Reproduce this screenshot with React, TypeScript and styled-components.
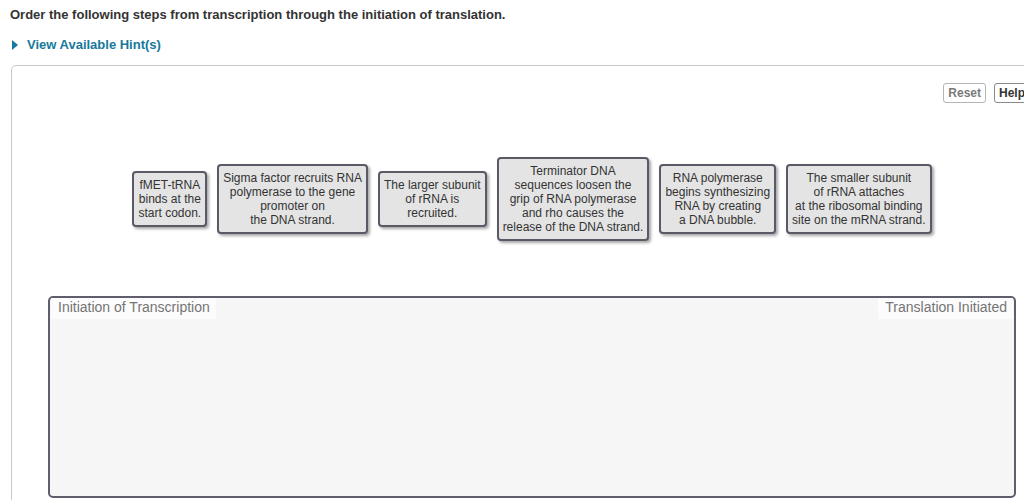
import styled, { createGlobalStyle } from 'styled-components';

const GlobalStyle = createGlobalStyle`
  html, body {
    margin: 0;
    padding: 0;
    overflow: hidden;
    background: #ffffff;
  }
  body {
    font-family: 'Liberation Sans', Arial, sans-serif;
    color: #333;
  }
`;

const Page = styled.div`
  width: 1060px;
  padding: 7px 0 0 0;
`;

const Prompt = styled.div`
  margin-left: 10px;
  font-size: 13px;
  font-weight: bold;
  line-height: 15px;
  color: #333;
`;

const HintToggle = styled.div`
  display: flex;
  align-items: center;
  gap: 9px;
  margin: 15px 0 0 12px;
  font-size: 13px;
  font-weight: bold;
  line-height: 15px;
  color: #17799b;
`;

const Triangle = styled.span`
  width: 0;
  height: 0;
  border-top: 5px solid transparent;
  border-bottom: 5px solid transparent;
  border-left: 6px solid #17799b;
`;

const Panel = styled.div`
  margin: 13px 0 0 11px;
  width: 1030px;
  height: 460px;
  border: 1px solid #c8c8c8;
  border-radius: 5px;
  padding: 17px 10px 0 0;
  box-sizing: border-box;
`;

const Toolbar = styled.div`
  display: flex;
  justify-content: flex-end;
  gap: 8px;
  height: 20px;
`;

const ToolButton = styled.button<{ $muted?: boolean }>`
  height: 20px;
  padding: 0 4px;
  border: 1px solid ${(p) => (p.$muted ? '#b5b5b5' : '#8a8a8a')};
  border-radius: 3px;
  background: #fff;
  font-family: 'Liberation Sans', Arial, sans-serif;
  font-size: 12px;
  font-weight: bold;
  color: ${(p) => (p.$muted ? '#7a7a7a' : '#333')};
  cursor: pointer;
`;

const CardRow = styled.div`
  display: flex;
  justify-content: center;
  align-items: center;
  gap: 10px;
  width: 968px;
  margin: 54px 0 0 36px;
  height: 84px;
`;

const Card = styled.div`
  border: 2px solid #5a5a66;
  border-radius: 4px;
  background: #e4e4e4;
  box-shadow: 2px 2px 3px rgba(0, 0, 0, 0.35);
  padding: 5px 4px;
  font-size: 12px;
  line-height: 14px;
  color: #333;
  text-align: center;
  white-space: nowrap;
`;

const DropZone = styled.div`
  width: 968px;
  height: 202px;
  margin: 55px 0 0 36px;
  box-sizing: border-box;
  border: 2px solid #5e5e6c;
  border-radius: 5px;
  background: #f6f6f6;
  display: flex;
  justify-content: space-between;
  align-items: flex-start;
  padding: 0 1px;
`;

const ZoneLabel = styled.div`
  background: #fcfcfc;
  padding: 1px 6px 3px 7px;
  font-size: 14px;
  line-height: 17px;
  color: #757575;
`;

const cards: string[][] = [
  ['fMET-tRNA', 'binds at the', 'start codon.'],
  ['Sigma factor recruits RNA', 'polymerase to the gene', 'promoter on', 'the DNA strand.'],
  ['The larger subunit', 'of rRNA is', 'recruited.'],
  [
    'Terminator DNA',
    'sequences loosen the',
    'grip of RNA polymerase',
    'and rho causes the',
    'release of the DNA strand.',
  ],
  ['RNA polymerase', 'begins synthesizing', 'RNA by creating', 'a DNA bubble.'],
  ['The smaller subunit', 'of rRNA attaches', 'at the ribosomal binding', 'site on the mRNA strand.'],
];

export default function App() {
  return (
    <Page>
      <GlobalStyle />
      <Prompt>Order the following steps from transcription through the initiation of translation.</Prompt>
      <HintToggle>
        <Triangle />
        View Available Hint(s)
      </HintToggle>
      <Panel>
        <Toolbar>
          <ToolButton $muted>Reset</ToolButton>
          <ToolButton>Help</ToolButton>
        </Toolbar>
        <CardRow>
          {cards.map((lines, i) => (
            <Card key={i}>
              {lines.map((line, j) => (
                <div key={j}>{line}</div>
              ))}
            </Card>
          ))}
        </CardRow>
        <DropZone>
          <ZoneLabel>Initiation of Transcription</ZoneLabel>
          <ZoneLabel>Translation Initiated</ZoneLabel>
        </DropZone>
      </Panel>
    </Page>
  );
}
